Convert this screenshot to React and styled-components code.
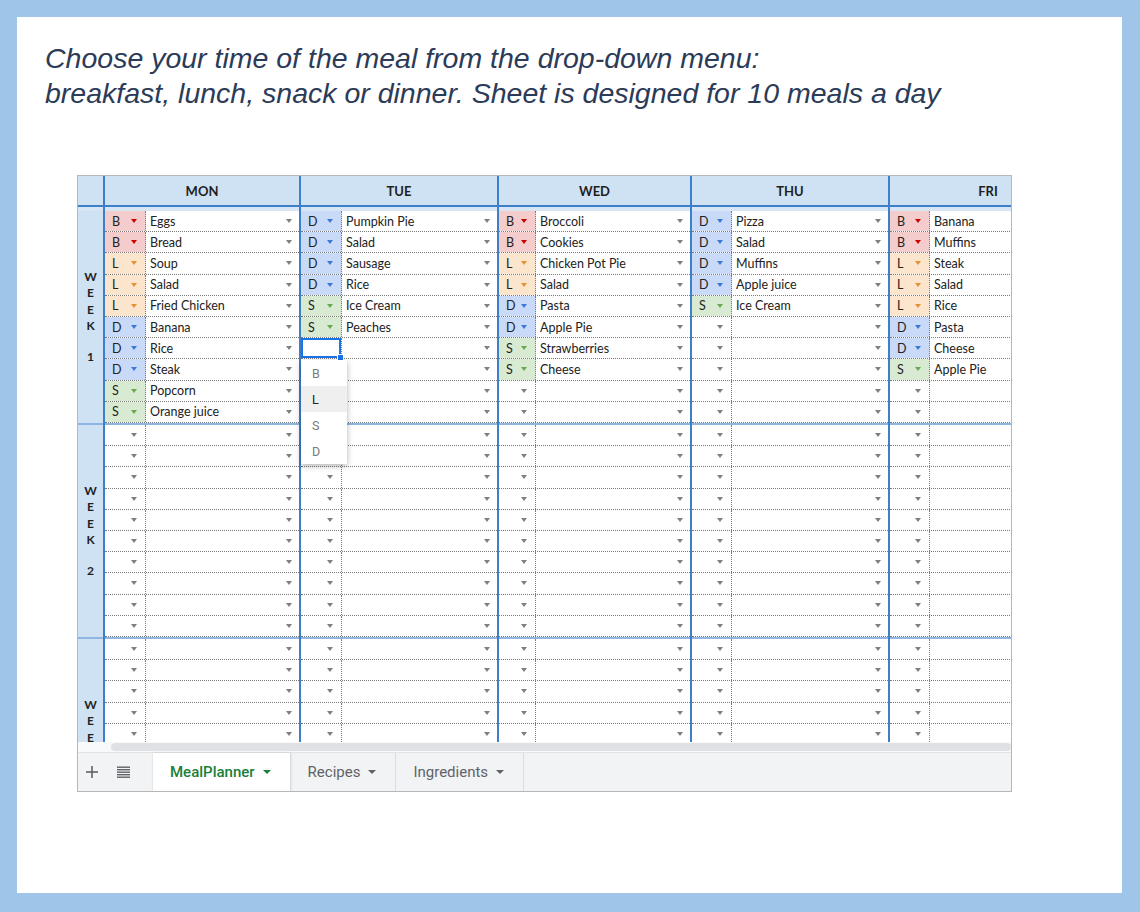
import React from "react";
import styled, { createGlobalStyle } from "styled-components";

const GlobalStyle = createGlobalStyle`
  body {
    margin: 0;
    background: #9fc5e8;
    font-family: "Liberation Sans", Arial, sans-serif;
  }
`;

const Panel = styled.div`
  margin: 17px;
  width: 1105px;
  height: 876px;
  box-sizing: border-box;
  background: #ffffff;
  padding: 24px 28px;
`;

const Title = styled.p`
  margin: 0;
  font-family: "Liberation Sans", Arial, sans-serif;
  font-style: italic;
  font-size: 28.5px;
  line-height: 35px;
  color: #2c3b57;
`;

const Sheet = styled.div`
  margin: 64px 0 0 32px;
  width: 935px;
  height: 617px;
  box-sizing: border-box;
  border: 1px solid #b7b7b7;
  background: #ffffff;
  display: flex;
  flex-direction: column;
  overflow: hidden;
`;

const Viewport = styled.div`
  flex: none;
  height: 566px;
  display: flex;
  overflow: hidden;
  font-family: Lato, "Open Sans", sans-serif;
  font-size: 12.5px;
  color: #222;
`;

const LabelColumn = styled.div`
  flex: none;
  width: 25px;
  background: #cfe2f3;
`;

const DayColumn = styled.div`
  flex: none;
  width: ${(p) => p.$w}px;
  box-sizing: border-box;
  border-left: 2px solid #3d7fc9;
`;

const HeadCell = styled.div`
  height: 29px;
  border-bottom: 2px solid #3d7fc9;
  background: #cfe2f3;
  display: flex;
  align-items: center;
  justify-content: center;
  font-weight: 700;
  font-size: 13px;
  color: #1f1f1f;
`;

const Strip = styled.div`
  height: 4px;
  background: #d7e5f4;
`;

const WeekBlock = styled.div`
  height: 212px;
  border-bottom: 2px solid #8fb6e3;
`;

const WeekLabel = styled(WeekBlock)`
  display: flex;
  flex-direction: column;
  align-items: center;
  justify-content: center;
  font-weight: 700;
  font-size: 12px;
  line-height: 16.6px;
  color: #1f1f1f;
`;

const WeekNum = styled.span`
  margin-top: 14px;
`;

const Row = styled.div`
  height: 21.2px;
  box-sizing: border-box;
  display: grid;
  grid-template-columns: ${(p) => p.$type}px 1fr;
  border-bottom: 1px dotted #7a7a7a;
`;

const kinds = {
  B: { bg: "#f4cccc", arrow: "#cc0000" },
  L: { bg: "#fce5cd", arrow: "#e69138" },
  D: { bg: "#c9daf8", arrow: "#3c78d8" },
  S: { bg: "#d9ead3", arrow: "#6aa84f" },
};

const TypeCell = styled.div`
  position: relative;
  display: flex;
  align-items: center;
  justify-content: ${(p) => (p.$kind ? "space-between" : "flex-end")};
  padding: 0 8px 0 7px;
  background: ${(p) => (p.$kind ? kinds[p.$kind].bg : "#ffffff")};
  border-right: 1px dotted #7a7a7a;
  ${(p) =>
    p.$selected &&
    `
    box-shadow: inset 0 0 0 2px #1a73e8;
  `}
`;

const FoodCell = styled.div`
  display: flex;
  align-items: center;
  justify-content: space-between;
  padding: 0 7px 0 4px;
  white-space: nowrap;
  overflow: hidden;
`;

const Arrow = styled.span`
  flex: none;
  width: 0;
  height: 0;
  border-left: ${(p) => (p.$big ? 4 : 3.5)}px solid transparent;
  border-right: ${(p) => (p.$big ? 4 : 3.5)}px solid transparent;
  border-top: ${(p) => (p.$big ? 4.5 : 4)}px solid ${(p) => p.$color || "#7f7f7f"};
`;

const Handle = styled.span`
  position: absolute;
  right: -3px;
  bottom: -3px;
  width: 5px;
  height: 5px;
  background: #1a73e8;
  border: 1px solid #fff;
  z-index: 3;
`;

const Popup = styled.div`
  position: absolute;
  top: calc(100% + 2px);
  left: 0;
  width: 46px;
  background: #fff;
  box-shadow: 0 2px 6px rgba(0, 0, 0, 0.3);
  z-index: 5;
  font-family: Roboto, Arial, sans-serif;
  font-size: 12.5px;
`;

const PopupItem = styled.div`
  height: 26px;
  display: flex;
  align-items: center;
  padding-left: 11px;
  color: ${(p) => (p.$active ? "#202124" : "#7a7a7a")};
  background: ${(p) => (p.$active ? "#efefef" : "transparent")};
`;

const ScrollArea = styled.div`
  flex: none;
  height: 10px;
  box-sizing: border-box;
  padding: 1px 0 1px 33px;
  background: #f8f9fa;
`;

const Thumb = styled.div`
  height: 8px;
  border-radius: 4px;
  background: #dfe1e4;
`;

const TabBar = styled.div`
  flex: 1;
  display: flex;
  align-items: stretch;
  background: #f1f3f4;
  border-top: 1px solid #e3e3e3;
  font-family: Roboto, Arial, sans-serif;
  font-size: 15px;
`;

const IconButton = styled.div`
  flex: none;
  width: ${(p) => p.$w}px;
  display: flex;
  align-items: center;
  justify-content: center;
  color: #5f6368;
`;

const Tab = styled.div`
  flex: none;
  display: flex;
  align-items: center;
  gap: 8px;
  padding: 0 19px 0 17px;
  background: ${(p) => (p.$active ? "#ffffff" : "transparent")};
  color: ${(p) => (p.$active ? "#188038" : "#5f6368")};
  font-weight: ${(p) => (p.$active ? 500 : 400)};
  border-right: 1px solid #dadce0;
  ${(p) => p.$active && "margin-left: 12px; box-shadow: 0 0 2px rgba(0,0,0,0.15);"}
`;

const days = [
  {
    name: "MON",
    w: 196,
    type: 41,
    meals: [
      ["B", "Eggs"],
      ["B", "Bread"],
      ["L", "Soup"],
      ["L", "Salad"],
      ["L", "Fried Chicken"],
      ["D", "Banana"],
      ["D", "Rice"],
      ["D", "Steak"],
      ["S", "Popcorn"],
      ["S", "Orange juice"],
    ],
  },
  {
    name: "TUE",
    w: 198,
    type: 41,
    meals: [
      ["D", "Pumpkin Pie"],
      ["D", "Salad"],
      ["D", "Sausage"],
      ["D", "Rice"],
      ["S", "Ice Cream"],
      ["S", "Peaches"],
    ],
    selected: 6,
  },
  {
    name: "WED",
    w: 193,
    type: 37,
    meals: [
      ["B", "Broccoli"],
      ["B", "Cookies"],
      ["L", "Chicken Pot Pie"],
      ["L", "Salad"],
      ["D", "Pasta"],
      ["D", "Apple Pie"],
      ["S", "Strawberries"],
      ["S", "Cheese"],
    ],
  },
  {
    name: "THU",
    w: 198,
    type: 40,
    meals: [
      ["D", "Pizza"],
      ["D", "Salad"],
      ["D", "Muffins"],
      ["D", "Apple juice"],
      ["S", "Ice Cream"],
    ],
  },
  {
    name: "FRI",
    w: 198,
    type: 40,
    meals: [
      ["B", "Banana"],
      ["B", "Muffins"],
      ["L", "Steak"],
      ["L", "Salad"],
      ["L", "Rice"],
      ["D", "Pasta"],
      ["D", "Cheese"],
      ["S", "Apple Pie"],
    ],
  },
];

const PlusIcon = () => (
  <svg width="12" height="12" viewBox="0 0 12 12">
    <rect x="5.2" y="0" width="1.6" height="12" fill="#5f6368" />
    <rect x="0" y="5.2" width="12" height="1.6" fill="#5f6368" />
  </svg>
);

const ListIcon = () => (
  <svg width="13" height="12" viewBox="0 0 13 12">
    {[0.5, 3, 5.5, 8, 10.5].map((y) => (
      <rect key={y} x="0" y={y} width="13" height="1.4" fill="#5f6368" />
    ))}
  </svg>
);

const Day = ({ day }) => (
  <DayColumn $w={day.w}>
    <HeadCell>{day.name}</HeadCell>
    <Strip />
    {[0, 1, 2].map((week) => (
      <WeekBlock key={week}>
        {Array.from({ length: 10 }).map((_, i) => {
          const meal = week === 0 ? day.meals[i] : null;
          const kind = meal ? meal[0] : null;
          const selected = week === 0 && day.selected === i;
          return (
            <Row key={i} $type={day.type}>
              <TypeCell $kind={kind} $selected={selected}>
                {kind && <span>{kind}</span>}
                {!selected && <Arrow $color={kind ? kinds[kind].arrow : null} />}
                {selected && (
                  <>
                    <Handle />
                    <Popup>
                      <PopupItem>B</PopupItem>
                      <PopupItem $active>L</PopupItem>
                      <PopupItem>S</PopupItem>
                      <PopupItem>D</PopupItem>
                    </Popup>
                  </>
                )}
              </TypeCell>
              <FoodCell>
                <span>{meal ? meal[1] : ""}</span>
                <Arrow />
              </FoodCell>
            </Row>
          );
        })}
      </WeekBlock>
    ))}
  </DayColumn>
);

const App = () => {
  return (
    <>
      <GlobalStyle />
      <Panel>
        <Title>
          Choose your time of the meal from the drop-down menu:
          <br />
          breakfast, lunch, snack or dinner. Sheet is designed for 10 meals a day
        </Title>
        <Sheet>
          <Viewport>
            <LabelColumn>
              <HeadCell />
              <Strip />
              {[1, 2, 3].map((n) => (
                <WeekLabel key={n}>
                  <span>W</span>
                  <span>E</span>
                  <span>E</span>
                  <span>K</span>
                  <WeekNum>{n}</WeekNum>
                </WeekLabel>
              ))}
            </LabelColumn>
            {days.map((d) => (
              <Day key={d.name} day={d} />
            ))}
          </Viewport>
          <ScrollArea>
            <Thumb />
          </ScrollArea>
          <TabBar>
            <IconButton $w={28}>
              <PlusIcon />
            </IconButton>
            <IconButton $w={35}>
              <ListIcon />
            </IconButton>
            <Tab $active>
              MealPlanner <Arrow $big $color="#188038" />
            </Tab>
            <Tab>
              Recipes <Arrow $big $color="#5f6368" />
            </Tab>
            <Tab>
              Ingredients <Arrow $big $color="#5f6368" />
            </Tab>
          </TabBar>
        </Sheet>
      </Panel>
    </>
  );
};

export default App;
